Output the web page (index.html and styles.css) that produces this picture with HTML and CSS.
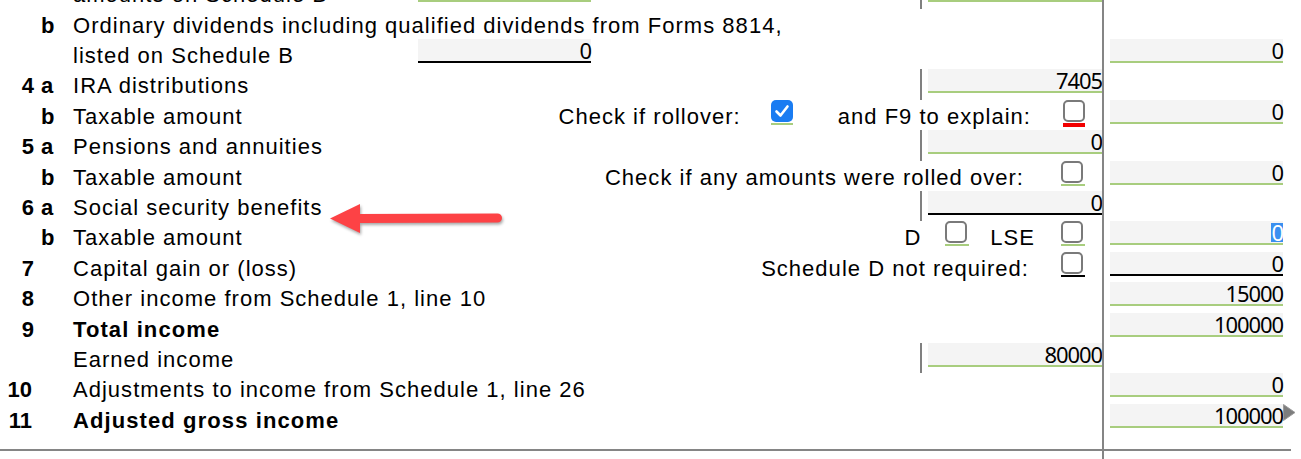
FILE: index.html
```html
<!DOCTYPE html>
<html>
<head>
<meta charset="utf-8">
<link rel="stylesheet" href="styles.css">
</head>
<body>
<div class="form">
  <div class="row">
    <span class="lbl">amounts on Schedule B</span>
    <span class="fld fld-l"></span>
    <span class="bar"></span>
    <span class="fld fld-m"></span>
    <span class="vdiv"></span>
  </div>
  <div class="row">
    <span class="let">b</span>
    <span class="lbl wide">Ordinary dividends including qualified dividends from Forms 8814,</span>
    <span class="vdiv"></span>
  </div>
  <div class="row">
    <span class="lbl">listed on Schedule B</span>
    <span class="fld fld-l blk">0</span>
    <span class="vdiv"></span>
    <span class="fld fld-r">0</span>
  </div>
  <div class="row">
    <span class="num">4</span><span class="let">a</span>
    <span class="lbl">IRA distributions</span>
    <span class="bar"></span>
    <span class="fld fld-m">7405</span>
    <span class="vdiv"></span>
  </div>
  <div class="row">
    <span class="let">b</span>
    <span class="lbl">Taxable amount</span>
    <span class="ctl">
      <span class="ct">Check if rollover:</span>
      <span class="cb ul-green m30"><span class="box checked"><svg viewBox="0 0 22 22" width="22" height="22"><path d="M5.5 11.5 L9.5 15.5 L16.5 6.5" fill="none" stroke="#fff" stroke-width="2.6" stroke-linecap="round" stroke-linejoin="round"/></svg></span></span>
      <span class="ct m45">and F9 to explain:</span>
      <span class="cb ul-red m32"><span class="box"></span></span>
    </span>
    <span class="vdiv"></span>
    <span class="fld fld-r">0</span>
  </div>
  <div class="row">
    <span class="num">5</span><span class="let">a</span>
    <span class="lbl">Pensions and annuities</span>
    <span class="bar"></span>
    <span class="fld fld-m">0</span>
    <span class="vdiv"></span>
  </div>
  <div class="row">
    <span class="let">b</span>
    <span class="lbl">Taxable amount</span>
    <span class="ctl">
      <span class="ct">Check if any amounts were rolled over:</span>
      <span class="cb ul-green m37"><span class="box"></span></span>
    </span>
    <span class="vdiv"></span>
    <span class="fld fld-r">0</span>
  </div>
  <div class="row rel">
    <span class="num">6</span><span class="let">a</span>
    <span class="lbl">Social security benefits</span>
    <span class="bar"></span>
    <span class="fld fld-m blk">0</span>
    <span class="vdiv"></span>
    <svg class="arrow" width="184" height="42" viewBox="0 0 184 42">
      <g class="arrow-g">
        <line x1="32" y1="18.5" x2="171.5" y2="18" stroke="#fd4245" stroke-width="9" stroke-linecap="round"/>
        <polygon points="4,18.5 34,4 34,33" fill="#fd4245"/>
      </g>
    </svg>
  </div>
  <div class="row">
    <span class="let">b</span>
    <span class="lbl">Taxable amount</span>
    <span class="ctl">
      <span class="ct">D</span>
      <span class="cb ul-green m24"><span class="box"></span></span>
      <span class="ct m21">LSE</span>
      <span class="cb ul-green m26"><span class="box"></span></span>
    </span>
    <span class="vdiv"></span>
    <span class="fld fld-r"><span class="sel">0</span></span>
  </div>
  <div class="row">
    <span class="num">7</span>
    <span class="lbl">Capital gain or (loss)</span>
    <span class="ctl">
      <span class="ct">Schedule D not required:</span>
      <span class="cb ul-black m32"><span class="box"></span></span>
    </span>
    <span class="vdiv"></span>
    <span class="fld fld-r blk">0</span>
  </div>
  <div class="row">
    <span class="num">8</span>
    <span class="lbl">Other income from Schedule 1, line 10</span>
    <span class="vdiv"></span>
    <span class="fld fld-r">15000</span>
  </div>
  <div class="row">
    <span class="num">9</span>
    <span class="lbl strong">Total income</span>
    <span class="vdiv"></span>
    <span class="fld fld-r">100000</span>
  </div>
  <div class="row">
    <span class="lbl">Earned income</span>
    <span class="bar"></span>
    <span class="fld fld-m">80000</span>
    <span class="vdiv"></span>
  </div>
  <div class="row">
    <span class="num n2">10</span>
    <span class="lbl">Adjustments to income from Schedule 1, line 26</span>
    <span class="vdiv"></span>
    <span class="fld fld-r">0</span>
  </div>
  <div class="row">
    <span class="num n2">11</span>
    <span class="lbl strong">Adjusted gross income</span>
    <span class="vdiv"></span>
    <span class="fld fld-r">100000</span>
    <svg class="more" width="13" height="17" viewBox="0 0 13 17"><polygon points="0.5,0.5 12,8.5 0.5,16.5" fill="#7d7d7d" stroke="#9a9a9a" stroke-width="1"/></svg>
  </div>
  <div class="row spacer"><span class="vdiv"></span></div>
  <div class="row rule"><span class="hr"></span><span class="vdiv"></span></div>
  <div class="row tail"><span class="vdiv"></span></div>
</div>
</body>
</html>
```

FILE: styles.css
```css
html, body {
  margin: 0;
  padding: 0;
  background: #ffffff;
  overflow: hidden;
}

body {
  width: 1301px;
  height: 459px;
  font-family: "Liberation Sans", Arial, sans-serif;
  font-size: 22px;
  color: #000;
}

.form {
  margin-top: -21.8px;
}

.row {
  display: grid;
  grid-template-columns: 34px 39px 345px 173px 329px 2px 6px 174px 2px 6px 173px 1fr;
  grid-template-rows: 30.4px;
}

.row > * {
  grid-row: 1;
}

.rel {
  position: relative;
}

.num,
.let,
.lbl,
.ct {
  padding-top: 2px;
  line-height: 30.4px;
  letter-spacing: 1.02px;
  white-space: nowrap;
}

.num {
  grid-column: 1;
  text-align: right;
  font-weight: bold;
  letter-spacing: 0;
}

.num.n2 {
  padding-right: 2px;
}

.let {
  grid-column: 2;
  padding-left: 7px;
  font-weight: bold;
}

.lbl {
  grid-column: 3 / 6;
}

.lbl.wide {
  grid-column: 3 / 9;
}

.lbl.strong {
  font-weight: bold;
  letter-spacing: 1.1px;
}

.fld {
  align-self: start;
  height: 22px;
  background: #f4f4f4;
  border-bottom: 2px solid #a8cd7e;
  text-align: right;
  font-family: "Noto Sans", "Open Sans", sans-serif;
  font-size: 22px;
  line-height: 22px;
  letter-spacing: -1.1px;
  white-space: nowrap;
  overflow: visible;
}

.fld.blk {
  border-bottom-color: #000;
}

.fld-l { grid-column: 4; }
.fld-m { grid-column: 8; }
.fld-r { grid-column: 11; }

.sel {
  display: inline-block;
  height: 19px;
  line-height: 19px;
  background: #3a8ff0;
  color: #fff;
  padding-left: 1px;
}

.bar {
  grid-column: 6;
  background: #808080;
}

.vdiv {
  grid-column: 9;
  background: #858585;
}

.ctl {
  grid-column: 5 / 9;
  display: flex;
  justify-content: flex-end;
  align-items: flex-start;
  padding-right: 17px;
}

.cb {
  width: 24px;
  padding-bottom: 1px;
  border-bottom: 2px solid #a8cd7e;
}

.cb.ul-red {
  border-bottom: 4px solid #f20000;
}

.cb.ul-black {
  border-bottom-color: #000;
}

.box {
  display: block;
  box-sizing: border-box;
  width: 22px;
  height: 22px;
  border: 2px solid #7a7a7a;
  border-radius: 5px;
  background: #fff;
}

.box.checked {
  border: none;
  background: #1a7cf2;
}

.box svg {
  display: block;
}

.m21 { margin-left: 21px; }
.m24 { margin-left: 24px; }
.m26 { margin-left: 26px; }
.m30 { margin-left: 30px; }
.m32 { margin-left: 32px; }
.m37 { margin-left: 37px; }
.m45 { margin-left: 45px; }

.arrow {
  position: absolute;
  left: 326px;
  top: 9px;
  overflow: visible;
}

.arrow-g {
  filter: drop-shadow(1px 2px 1.5px rgba(0, 0, 0, 0.35));
}

.more {
  grid-column: 12;
  align-self: start;
  display: block;
}

.row.spacer {
  grid-template-rows: 14.5px;
}

.row.rule {
  grid-template-rows: 2px;
}

.row.tail {
  grid-template-rows: 12px;
}

.hr {
  grid-column: 1 / -1;
  margin-right: 10px;
  background: #858585;
}
```
